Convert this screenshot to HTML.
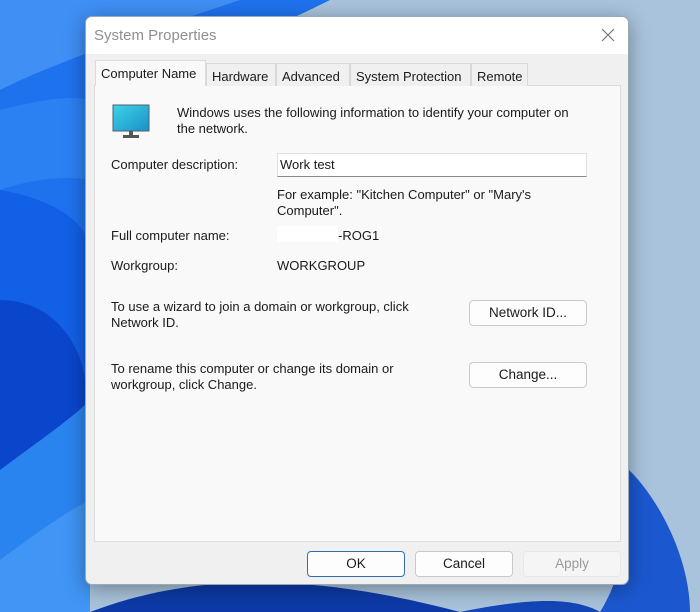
<!DOCTYPE html>
<html><head><meta charset="utf-8"><style>
*{margin:0;padding:0;box-sizing:border-box}
body{width:700px;height:612px;overflow:hidden;position:relative;font-family:"Liberation Sans",sans-serif;font-size:13px;color:#1a1a1a;background:#a8c2db}
.abs{position:absolute}
.dlg{left:85px;top:16px;width:544px;height:569px;background:#f0f0f0;border-radius:7px;overflow:hidden;box-shadow:0 4px 20px rgba(0,0,0,.35);border:1px solid #9aa9b8}
.title{left:0;top:0;width:544px;height:37px;background:#fff}
.tab{top:46px;height:23px;border:1px solid #d9d9d9;border-bottom:none;background:#f0f0f0;padding:5px 5px 0;white-space:nowrap}
.panel{left:8px;top:68px;width:527px;height:457px;background:#f9f9f9;border:1px solid #dcdcdc}
.btn{height:26px;border:1px solid #c9c9c9;border-radius:4px;background:#fdfdfd;text-align:center;line-height:24px;font-size:13.5px}
</style></head><body>
<svg class="abs" style="left:0;top:0" width="700" height="612">
<rect width="700" height="612" fill="#a9c3dc"/>
<path d="M0 0 H330 C250 40 150 80 90 120 V612 H0Z" fill="#1f72ee"/>
<path d="M0 0 H240 C150 30 60 60 0 90Z" fill="#3f8ff5"/>
<path d="M0 110 C40 100 70 95 90 100 V180 C60 175 30 180 0 190Z" fill="#2b80f2"/>
<path d="M0 190 C60 200 100 230 85 260 V612 H0Z" fill="#1260e6"/>
<path d="M0 300 C50 300 80 340 85 380 V612 H0Z" fill="#0a46cc"/>
<path d="M0 470 C40 440 70 420 90 400 V612 H0Z" fill="#2a84f0"/>
<path d="M0 560 C40 530 70 510 90 500 V612 H0Z" fill="#4a9cf6" opacity=".7"/>
<path d="M629 470 C660 500 690 560 690 612 H600 C620 580 629 540 629 470Z" fill="#1b58d0"/>
<path d="M90 612 C200 570 320 575 460 612Z" fill="#0d3aa8"/>
<path d="M460 612 C520 600 570 595 600 612Z" fill="#1446b8"/>
</svg>
<div class="abs dlg">
 <div class="abs title"></div>
 <div class="abs" style="left:8px;top:10px;font-size:15px;color:#8f8f8f">System Properties</div>
 <svg class="abs" style="left:515px;top:11px" width="14" height="14"><path d="M1 1L13 13M13 1L1 13" stroke="#777" stroke-width="1.2"/></svg>
 <div class="abs panel"></div>
 <div class="abs tab" style="left:120px;width:70px">Hardware</div>
 <div class="abs tab" style="left:190px;width:74px">Advanced</div>
 <div class="abs tab" style="left:264px;width:121px">System Protection</div>
 <div class="abs tab" style="left:385px;width:57px">Remote</div>
 <div class="abs tab" style="left:9px;top:43px;height:26px;width:111px;background:#f9f9f9;padding-top:5px;border-color:#dcdcdc">Computer Name</div>
 <svg class="abs" style="left:26px;top:87px" width="38" height="36"><defs><linearGradient id="s" x1="0" y1="0" x2="1" y2="1"><stop offset="0" stop-color="#3fd3e6"/><stop offset="1" stop-color="#1a8fc8"/></linearGradient></defs><rect x="1" y="1" width="36" height="26" fill="url(#s)" stroke="#4c6470"/><rect x="17" y="27" width="4" height="4" fill="#555"/><rect x="11" y="31" width="16" height="3" fill="#555"/></svg>
 <div class="abs" style="left:91px;top:88px;line-height:16px">Windows uses the following information to identify your computer on<br>the network.</div>
 <div class="abs" style="left:25px;top:140px">Computer description:</div>
 <div class="abs" style="left:191px;top:136px;width:310px;height:24px;background:#fff;border:1px solid #e0e0e0;border-bottom:1px solid #888;padding:3px 2px;">Work test</div>
 <div class="abs" style="left:191px;top:170px;line-height:16px">For example: "Kitchen Computer" or "Mary's<br>Computer".</div>
 <div class="abs" style="left:25px;top:211px">Full computer name:</div>
 <div class="abs" style="left:191px;top:209px;width:61px;height:16px;background:#fff"></div>
 <div class="abs" style="left:252px;top:211px">-ROG1</div>
 <div class="abs" style="left:25px;top:241px">Workgroup:</div>
 <div class="abs" style="left:191px;top:241px">WORKGROUP</div>
 <div class="abs" style="left:25px;top:282px;line-height:16px">To use a wizard to join a domain or workgroup, click<br>Network ID.</div>
 <div class="abs btn" style="left:383px;top:283px;width:118px">Network ID...</div>
 <div class="abs" style="left:25px;top:344px;line-height:16px">To rename this computer or change its domain or<br>workgroup, click Change.</div>
 <div class="abs btn" style="left:383px;top:345px;width:118px">Change...</div>
 <div class="abs btn" style="left:221px;top:534px;width:98px;border-color:#2f6fb0">OK</div>
 <div class="abs btn" style="left:329px;top:534px;width:98px">Cancel</div>
 <div class="abs btn" style="left:437px;top:534px;width:98px;background:#f5f5f5;border-color:#e8e8e8;color:#999">Apply</div>
</div>
</body></html>
